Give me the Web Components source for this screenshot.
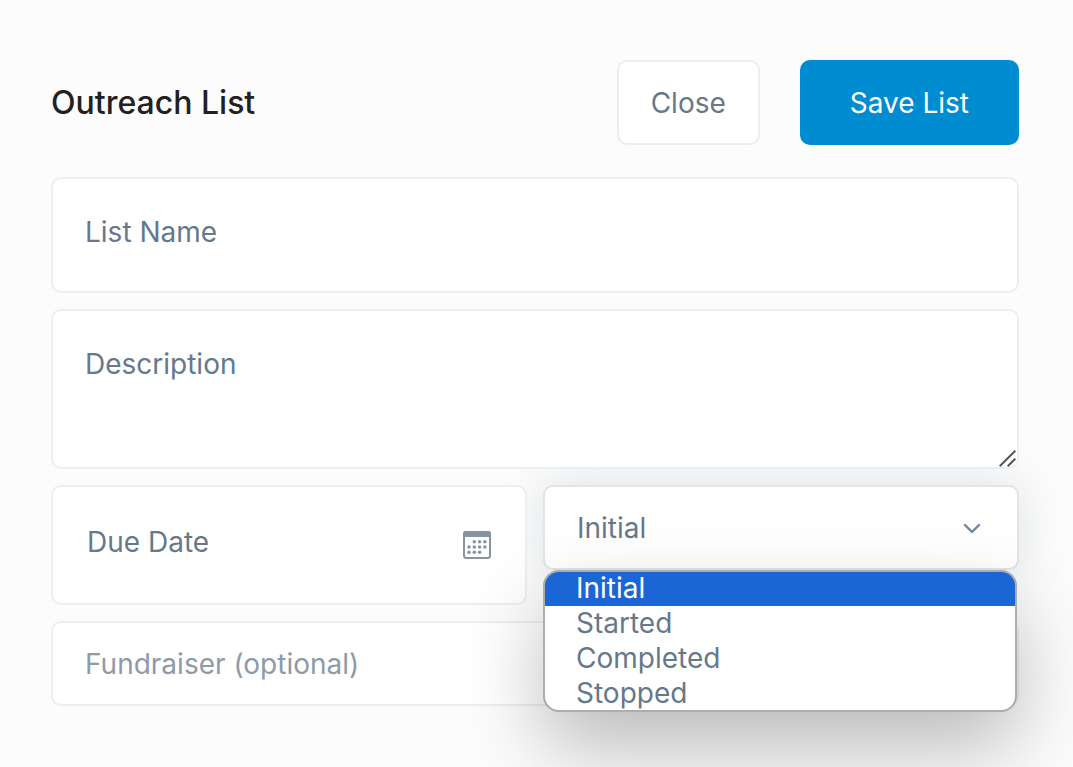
<!DOCTYPE html>
<html lang="en">
<head>
<meta charset="utf-8">
<meta name="viewport" content="width=device-width, initial-scale=1">
<title>Outreach List</title>
<style>
  html { background: #fcfcfc; }
  body {
    margin: 0;
    min-height: 100vh;
    font-family: Inter, "Liberation Sans", sans-serif;
    font-size: 28px;
    line-height: 34px;
    color: #66788a;
    --line: #eaeff5;
    --text: #66788a;
  }
</style>
</head>
<body>
<outreach-form></outreach-form>

<script>
const define = (name, html, setup) => {
  const template = document.createElement('template');
  template.innerHTML = html;
  customElements.define(name, class extends HTMLElement {
    constructor() {
      super();
      this.attachShadow({ mode: 'open' }).append(template.content.cloneNode(true));
    }
    connectedCallback() { if (setup) setup(this, this.shadowRoot); }
  });
};

define('action-button', `
<style>
  :host { display: block; }
  button {
    box-sizing: border-box; font: inherit; color: var(--text); cursor: pointer;
    height: 85px; padding: 0 32px; background: #fff;
    border: 2px solid var(--line); border-radius: 10px;
  }
  :host([primary]) button { background: #008cd1; border-color: #008cd1; color: #fff; padding: 0 48px; }
</style>
<button type="button"><slot></slot></button>`);

define('text-field', `
<style>
  :host { display: block; }
  input {
    display: block; box-sizing: border-box; width: 100%; height: 85px; margin: 0;
    font: inherit; color: var(--text); background: #fff; padding: 0 32px;
    border: 2px solid var(--line); border-radius: 10px; outline: 0;
  }
  :host([tall]) input { height: 116px; padding-bottom: 6px; }
  input::placeholder { color: var(--text); opacity: 1; }
  :host([muted]) input::placeholder { color: #8d9aa7; }
</style>
<input type="text">`, (host, root) => {
  const input = root.querySelector('input');
  input.placeholder = host.getAttribute('label');
  input.setAttribute('aria-label', input.placeholder);
});

define('text-area-field', `
<style>
  :host { display: block; position: relative; z-index: 1; }
  textarea {
    display: block; box-sizing: border-box; width: 100%; height: 160px; margin: 0; resize: none;
    font: inherit; color: var(--text); background: #fff; padding: 36px 32px;
    border: 2px solid var(--line); border-radius: 10px; outline: 0;
  }
  textarea::placeholder { color: var(--text); opacity: 1; }
  svg { position: absolute; right: 3px; bottom: 2px; }
</style>
<textarea></textarea>
<svg width="17" height="17" viewBox="0 0 17 17" fill="none" stroke="#555" stroke-width="2" aria-hidden="true"><path d="M.7 16.3 16.3.7M8.7 16.3l7.6-7.6"/></svg>`, (host, root) => {
  const area = root.querySelector('textarea');
  area.placeholder = host.getAttribute('label');
  area.setAttribute('aria-label', area.placeholder);
});

define('date-field', `
<style>
  :host {
    display: flex; align-items: center; box-sizing: border-box; height: 120px; padding: 0 32px;
    background: #fff; border: 2px solid var(--line); border-radius: 10px; position: relative; z-index: 1;
  }
  input {
    flex: 1; min-width: 0; box-sizing: border-box; height: 116px; margin: 0; padding: 0 2px 6px; border: 0; outline: 0;
    font: inherit; color: var(--text); background: none;
  }
  input::placeholder { color: var(--text); opacity: 1; }
  button { display: block; padding: 0; border: 0; background: none; cursor: pointer; line-height: 0; }
</style>
<input type="text" placeholder="Due Date" aria-label="Due Date">
<button type="button" aria-label="Open calendar">
  <svg width="30" height="28" viewBox="1 0 30 28">
    <rect x="2" y="1" width="26" height="26" rx="2.5" fill="#fff" stroke="#8795a2" stroke-width="2"/>
    <path d="M1 6V3a3 3 0 0 1 3-3h22a3 3 0 0 1 3 3v3z" fill="#8795a2"/>
    <g fill="#8795a2">
      <circle cx="12.3" cy="10.7" r="1.8"/><circle cx="17.6" cy="10.7" r="1.8"/><circle cx="22.9" cy="10.7" r="1.8"/>
      <circle cx="7" cy="16" r="1.8"/><circle cx="12.3" cy="16" r="1.8"/><circle cx="17.6" cy="16" r="1.8"/><circle cx="22.9" cy="16" r="1.8"/>
      <circle cx="7" cy="21.3" r="1.8"/><circle cx="12.3" cy="21.3" r="1.8"/><circle cx="17.6" cy="21.3" r="1.8"/>
    </g>
  </svg>
</button>`);

define('status-select', `
<style>
  :host { display: block; position: relative; }
  .control { position: relative; }
  select {
    display: block; box-sizing: border-box; width: 100%; height: 85px; margin: 0; padding: 0 32px;
    appearance: none; font: inherit; color: var(--text); background: #fff; outline: 0;
    border: 2px solid #e1e4e9; border-radius: 10px;
    box-shadow: 0 0 50px rgba(90, 110, 125, .2);
  }
  .control svg { position: absolute; right: 38px; top: 38px; pointer-events: none; }
  .menu {
    position: absolute; z-index: 2; top: 85px; left: 0; right: 2px; box-sizing: border-box;
    border: 1px solid #adadad; border-radius: 16px; background: #fff;
    box-shadow: 0 36px 80px rgba(0, 0, 0, .26);
  }
  .menu::after {
    content: ""; position: absolute; inset: -1px; border: 2px solid #adadad; border-radius: 16px; pointer-events: none;
  }
  .option { height: 35px; line-height: 35px; padding: 0 32px; }
  .option[aria-selected="true"] { background: #1966d4; color: #fff; border-radius: 15px 15px 0 0; }
</style>
<div class="control">
  <select aria-label="Status">
    <option selected>Initial</option><option>Started</option><option>Completed</option><option>Stopped</option>
  </select>
  <svg width="18" height="11" viewBox="0 0 18 11" fill="none" stroke="#6f86a0" stroke-width="2.4" stroke-linecap="round" stroke-linejoin="round" aria-hidden="true"><path d="m2 2 7 7 7-7"/></svg>
</div>
<div class="menu" role="listbox" aria-label="Status options">
  <div class="option" role="option" aria-selected="true">Initial</div>
  <div class="option" role="option">Started</div>
  <div class="option" role="option">Completed</div>
  <div class="option" role="option">Stopped</div>
</div>`);

define('outreach-form', `
<style>
  :host { display: block; padding: 60px 54px 60px 51px; }
  header { display: flex; align-items: center; gap: 40px; margin-bottom: 32px; }
  h1 { flex: 1; margin: 0; font-size: 32px; line-height: 40px; font-weight: 500; color: #212121; }
  form { display: grid; gap: 16px; }
  .row { display: grid; grid-template-columns: repeat(2, minmax(0, 1fr)); gap: 16px; align-items: start; }
</style>
<header>
  <h1>Outreach List</h1>
  <action-button>Close</action-button>
  <action-button primary>Save List</action-button>
</header>
<form>
  <text-field tall label="List Name"></text-field>
  <text-area-field label="Description"></text-area-field>
  <div class="row">
    <date-field></date-field>
    <status-select></status-select>
  </div>
  <text-field muted label="Fundraiser (optional)"></text-field>
</form>`);
</script>
</body>
</html>
